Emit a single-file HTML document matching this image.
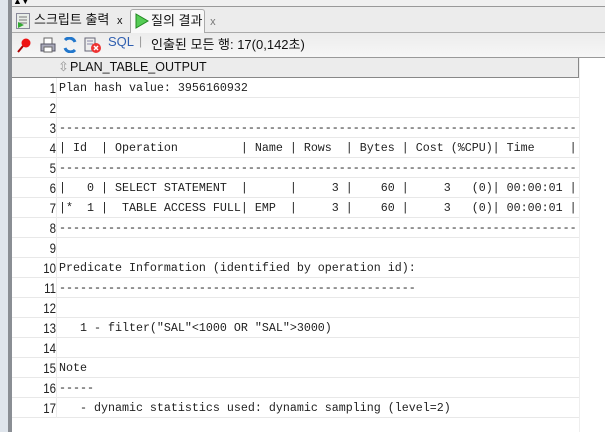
<!DOCTYPE html>
<html><head><meta charset="utf-8"><style>
*{margin:0;padding:0;box-sizing:border-box}
body{width:605px;height:432px;overflow:hidden;background:#fff;position:relative;font-family:"Liberation Sans","Noto Sans CJK KR",sans-serif}
.abs{position:absolute}
#left{left:0;top:0;width:8px;height:432px;background:#dfe5ec}
#leftbar{left:8px;top:0;width:4px;height:432px;background:#8a8e94}
#top{left:12px;top:0;width:593px;height:7px;background:#f0f0f0;border-bottom:1px solid #999}
#tabs{left:12px;top:7px;width:593px;height:26px;background:#ececec;border-bottom:1px solid #aaa}
.tab{position:absolute;top:2px;height:24px;font-size:13px;line-height:22px;color:#111}
#tb{left:12px;top:33px;width:593px;height:25px;background:linear-gradient(#ececec,#f6f6f6);border-bottom:1px solid #999}
#hdr{left:12px;top:58px;width:567px;height:20px;background:#ececec;border-bottom:1px solid #888;border-right:1px solid #888}
.row{position:absolute;left:12px;width:567px;height:20px;border-bottom:1px solid #e8e8e8}
.num{position:absolute;left:0;width:44px;text-align:right;font-size:14px;line-height:20px;color:#222;font-family:"Liberation Sans",sans-serif;transform:scaleX(.82);transform-origin:right}
.sep{position:absolute;left:44px;top:0;width:1px;height:20px;background:#ececec}
.txt{position:absolute;left:47px;font-family:"Liberation Mono",monospace;font-size:11.67px;line-height:20px;color:#222;white-space:pre}
</style></head><body>
<div id="left" class="abs"></div>
<div id="leftbar" class="abs"></div>
<div id="top" class="abs"><span style="position:absolute;left:1px;top:-4px;font-size:9px;letter-spacing:-1px">▲▼</span></div>
<div id="tabs" class="abs">
 <div class="tab" style="left:2px">
  <svg width="14" height="16" style="position:absolute;left:2px;top:4px"><rect x="0.5" y="0.5" width="13" height="15" fill="#e8ede8" stroke="#889"/><path d="M3 4h8M3 7h8M3 10h8" stroke="#777"/><path d="M2 9l6 3-6 3z" fill="#3a3"/></svg>
  <span style="position:absolute;left:20px;white-space:nowrap">스크립트 출력 <span style="font-size:11px;margin-left:4px">x</span></span>
 </div>
 <div class="tab" style="left:118px;width:75px;background:#f8f8f8;border:1px solid #aaa;border-bottom:none;border-radius:3px 3px 0 0">
  <svg width="14" height="16" style="position:absolute;left:4px;top:3px"><path d="M1 1l12 7-12 7z" fill="#5c5" stroke="#282"/></svg>
  <span style="position:absolute;left:20px;white-space:nowrap">질의 결과 <span style="font-size:11px;color:#777;margin-left:4px">x</span></span>
 </div>
</div>
<div id="tb" class="abs">
 <svg width="16" height="16" style="position:absolute;left:4px;top:4px"><path d="M2 15l5-6" stroke="#a00" stroke-width="2"/><circle cx="10" cy="6" r="4.5" fill="#e11"/></svg>
 <svg width="16" height="16" style="position:absolute;left:28px;top:4px"><rect x="4" y="1" width="8" height="6" fill="#fff" stroke="#666"/><rect x="1" y="7" width="14" height="7" fill="#aab" stroke="#556"/><rect x="4" y="10" width="8" height="5" fill="#fff" stroke="#666"/></svg>
 <svg width="16" height="16" style="position:absolute;left:50px;top:4px"><path d="M3 3a6 6 0 0 1 10 2M13 13a6 6 0 0 1-10-2" fill="none" stroke="#27c" stroke-width="3"/></svg>
 <svg width="18" height="16" style="position:absolute;left:72px;top:4px"><rect x="1" y="1" width="10" height="13" fill="#eee" stroke="#667"/><path d="M3 4h6M3 7h6" stroke="#88a"/><circle cx="12" cy="11" r="5" fill="#e33"/><path d="M10 9l4 4M14 9l-4 4" stroke="#fff" stroke-width="1.5"/></svg>
 <span style="position:absolute;left:96px;top:1px;font-size:13px;color:#2f5fb0">SQL</span>
 <span style="position:absolute;left:127px;top:1px;font-size:12px;color:#999">|</span>
 <span style="position:absolute;left:139px;top:1px;font-size:13px;color:#111;white-space:nowrap">인출된 모든 행: 17(0,142초)</span>
</div>
<div id="hdr" class="abs">
 <span style="position:absolute;left:46px;top:1px;font-size:13px;color:#999">⇳</span>
 <span style="position:absolute;left:58px;top:2px;font-size:12.5px;color:#111">PLAN_TABLE_OUTPUT</span>
</div>
<div class="abs" style="left:579px;top:58px;width:26px;height:374px;background:#fff;border-left:1px solid #eee"></div>
<div id="rows"></div>
<script>
var L=["Plan hash value: 3956160932","",
"--------------------------------------------------------------------------",
"| Id  | Operation         | Name | Rows  | Bytes | Cost (%CPU)| Time     |",
"--------------------------------------------------------------------------",
"|   0 | SELECT STATEMENT  |      |     3 |    60 |     3   (0)| 00:00:01 |",
"|*  1 |  TABLE ACCESS FULL| EMP  |     3 |    60 |     3   (0)| 00:00:01 |",
"--------------------------------------------------------------------------",
"","Predicate Information (identified by operation id):",
"---------------------------------------------------","",
"   1 - filter(\"SAL\"<1000 OR \"SAL\">3000)","","Note","-----",
"   - dynamic statistics used: dynamic sampling (level=2)"];
var h="";
for(var i=0;i<L.length;i++){var t=L[i].replace(/&/g,"&amp;").replace(/</g,"&lt;").replace(/>/g,"&gt;");
h+='<div class="row" style="top:'+(78+i*20)+'px"><div class="num">'+(i+1)+'</div><div class="sep"></div><div class="txt">'+t+'</div></div>';}
document.getElementById("rows").innerHTML=h;
</script>
</body></html>
